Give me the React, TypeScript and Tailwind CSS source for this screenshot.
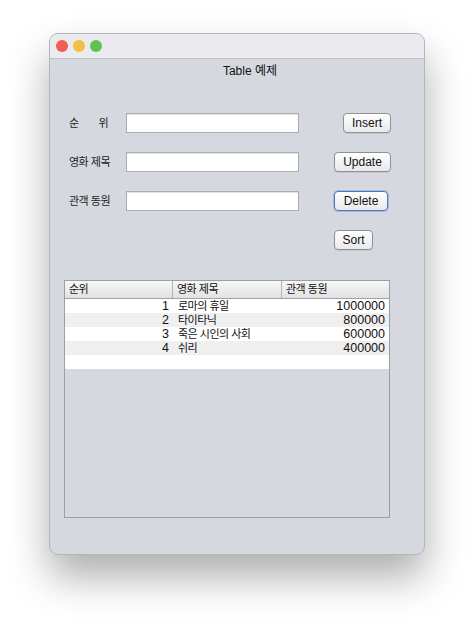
const rows = [
  { rank: 1, title: "로마의 휴일", audience: 1000000 },
  { rank: 2, title: "타이타닉", audience: 800000 },
  { rank: 3, title: "죽은 시인의 사회", audience: 600000 },
  { rank: 4, title: "쉬리", audience: 400000 },
];

const font = "font-['Liberation_Sans','Noto_Sans_CJK_KR',sans-serif]";

function TextField() {
  return (
    <div className="h-[20px] w-[173px] shrink-0 border border-[#abadb3] bg-white shadow-[inset_0_1px_1px_rgba(0,0,0,0.12)]" />
  );
}

function Button({
  label,
  width,
  focused,
  className = "",
}: {
  label: string;
  width: string;
  focused?: boolean;
  className?: string;
}) {
  return (
    <button
      className={`${width} ${className} flex h-[20px] shrink-0 items-center justify-center rounded-[4px] border bg-gradient-to-b from-white to-[#e9e9ec] text-[12px] leading-none text-[#111] ${
        focused
          ? "border-[#4d78b8] shadow-[0_0_0_1px_rgba(120,160,220,0.55)]"
          : "border-[#8e9097] shadow-[0_1px_0_rgba(0,0,0,0.08)]"
      }`}
    >
      {label}
    </button>
  );
}

function FormRow({ label, children }: { label: React.ReactNode; children: React.ReactNode }) {
  return (
    <div className="flex h-[20px] items-center">
      <div className="w-[76px] shrink-0 whitespace-nowrap pl-[19px] text-[11px] tracking-[-0.5px] text-[#1c1c1c]">
        {label}
      </div>
      <TextField />
      <div className="ml-[35px] flex">{children}</div>
    </div>
  );
}

export default function App() {
  return (
    <div className={`h-[620px] w-[474px] bg-white pl-[49px] pt-[33px] ${font}`}>
      <div className="flex h-[522px] w-[376px] flex-col overflow-hidden rounded-[9px] border border-[#b4b6bc] bg-[#d6d8df] shadow-[0_22px_40px_rgba(0,0,0,0.32)]">
        {/* title bar */}
        <div className="flex h-[25px] shrink-0 items-center gap-[5px] border-b border-[#c2c3c9] bg-[#ebebef] pl-[6px]">
          <span className="h-[12px] w-[12px] rounded-full bg-[#ec5e56]" />
          <span className="h-[12px] w-[12px] rounded-full bg-[#f4bd43]" />
          <span className="h-[12px] w-[12px] rounded-full bg-[#5ec34f]" />
        </div>

        <div className="mt-[5px] pl-[26px] text-center text-[12px] leading-[15px] text-[#111]">
          Table 예제
        </div>

        <div className="mt-[34px] flex flex-col gap-[19px]">
          <FormRow
            label={
              <span className="flex w-[39px] justify-between">
                <span>순</span>
                <span>위</span>
              </span>
            }
          >
            <Button label="Insert" width="w-[48px]" className="ml-[9px]" />
          </FormRow>
          <FormRow label="영화 제목">
            <Button label="Update" width="w-[57px]" />
          </FormRow>
          <FormRow label="관객 동원">
            <Button label="Delete" width="w-[54px]" focused />
          </FormRow>
          <div className="flex h-[20px] pl-[284px]">
            <Button label="Sort" width="w-[39px]" />
          </div>
        </div>

        {/* table */}
        <div className="ml-[14px] mt-[30px] flex h-[238px] w-[326px] flex-col border border-[#9c9ea5] bg-[#d6d8df]">
          <div className="flex h-[18px] shrink-0 border-b border-[#9fa1a6] bg-gradient-to-b from-[#f7f7f7] to-[#e2e2e4] text-[11px] leading-[17px] tracking-[-0.5px] text-[#111]">
            <div className="w-[108px] border-r border-[#b3b3b6] pl-[4px]">순위</div>
            <div className="w-[109px] border-r border-[#b3b3b6] pl-[4px]">영화 제목</div>
            <div className="flex-1 pl-[4px]">관객 동원</div>
          </div>
          {rows.map((r, i) => (
            <div
              key={r.rank}
              className={`flex h-[14px] text-[12.5px] leading-[14px] text-[#111] ${
                i % 2 === 1 ? "bg-[#efefef]" : "bg-white"
              }`}
            >
              <div className="w-[108px] pr-[4px] text-right">{r.rank}</div>
              <div className="w-[109px] pl-[5px] text-[11px] tracking-[-0.5px]">{r.title}</div>
              <div className="flex-1 pr-[4px] text-right">{r.audience}</div>
            </div>
          ))}
          <div className="h-[14px] bg-white" />
        </div>
      </div>
    </div>
  );
}
